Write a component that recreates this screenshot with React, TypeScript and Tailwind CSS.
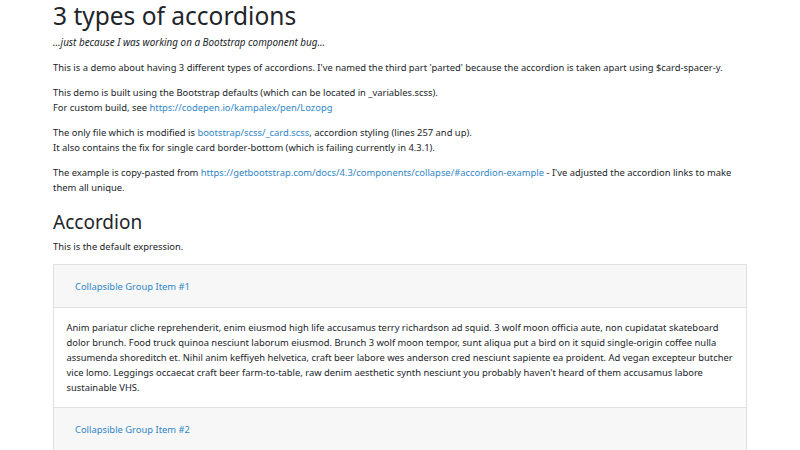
const body =
  "Anim pariatur cliche reprehenderit, enim eiusmod high life accusamus terry richardson ad squid. 3 wolf moon officia aute, non cupidatat skateboard dolor brunch. Food truck quinoa nesciunt laborum eiusmod. Brunch 3 wolf moon tempor, sunt aliqua put a bird on it squid single-origin coffee nulla assumenda shoreditch et. Nihil anim keffiyeh helvetica, craft beer labore wes anderson cred nesciunt sapiente ea proident. Ad vegan excepteur butcher vice lomo. Leggings occaecat craft beer farm-to-table, raw denim aesthetic synth nesciunt you probably haven't heard of them accusamus labore sustainable VHS.";

const Link = ({ children }: { children: React.ReactNode }) => (
  <a href="#" className="text-[#2f86c8]">
    {children}
  </a>
);

const Header = ({ label }: { label: string }) => (
  <div className="h-[43px] flex items-center px-[21px] bg-[#f7f7f7] border-b border-[#e0e0e0]">
    <button className="text-[#2f86c8] text-[9.4px] leading-[15px]">{label}</button>
  </div>
);

export default function App() {
  return (
    <div className="min-h-[450px] bg-white text-[#212529] font-['Noto_Sans',sans-serif] text-[9.4px] leading-[15px]">
      <div className="mx-auto w-[694px]">
        <h1 className="text-[24.5px] leading-[31px] mb-[4px]">3 types of accordions</h1>
        <p className="italic text-[9.9px] mb-[10px]">...just because I was working on a Bootstrap component bug...</p>
        <p className="mb-[10px]">
          This is a demo about having 3 different types of accordions. I've named the third part 'parted' because the
          accordion is taken apart using $card-spacer-y.
        </p>
        <p className="mb-[10px]">
          This demo is built using the Bootstrap defaults (which can be located in _variables.scss).
          <br />
          For custom build, see <Link>https://codepen.io/kampalex/pen/Lozopg</Link>
        </p>
        <p className="mb-[10px]">
          The only file which is modified is <Link>bootstrap/scss/_card.scss</Link>, accordion styling (lines 257 and up).
          <br />
          It also contains the fix for single card border-bottom (which is failing currently in 4.3.1).
        </p>
        <p className="mb-[10px]">
          The example is copy-pasted from{" "}
          <Link>https://getbootstrap.com/docs/4.3/components/collapse/#accordion-example</Link> - I've adjusted the
          accordion links to make them all unique.
        </p>
        <h2 className="text-[19px] leading-[24px] mt-[15px] mb-[5px]">Accordion</h2>
        <p className="mb-[10px]">This is the default expression.</p>
        <div className="border border-[#e0e0e0]">
          <Header label="Collapsible Group Item #1" />
          <div className="px-[12.5px] py-[12px] border-b border-[#e0e0e0]">{body}</div>
          <Header label="Collapsible Group Item #2" />
        </div>
      </div>
    </div>
  );
}
